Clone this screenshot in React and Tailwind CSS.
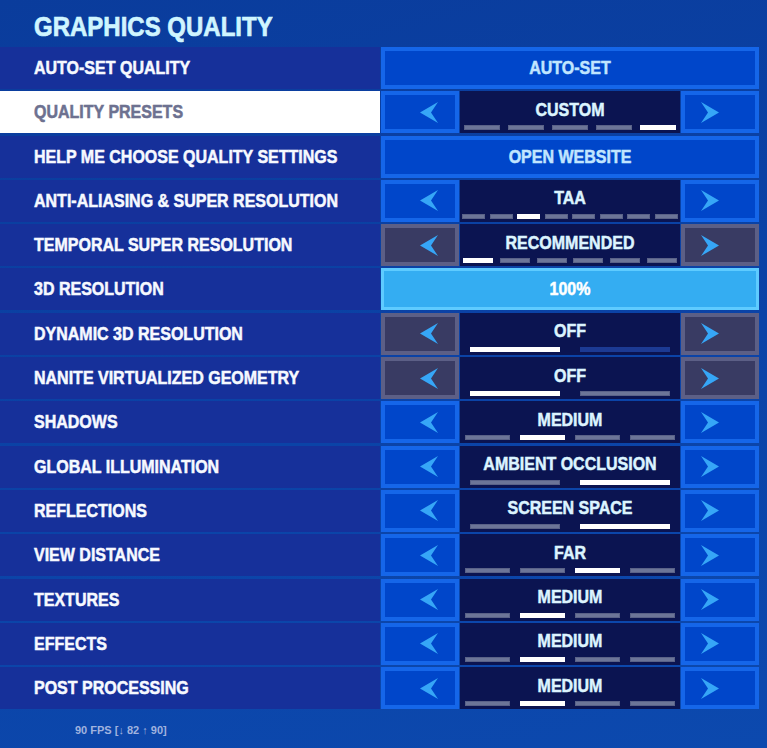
import React from 'react';

const FONT = { fontFamily: '"Liberation Sans", Arial, sans-serif' };

const ROWS = [
  { label: 'AUTO-SET QUALITY', type: 'button', value: 'AUTO-SET' },
  { label: 'QUALITY PRESETS', type: 'picker', value: 'CUSTOM', count: 5, sel: 4, active: true },
  { label: 'HELP ME CHOOSE QUALITY SETTINGS', type: 'button', value: 'OPEN WEBSITE' },
  { label: 'ANTI-ALIASING & SUPER RESOLUTION', type: 'picker', value: 'TAA', count: 8, sel: 2 },
  { label: 'TEMPORAL SUPER RESOLUTION', type: 'picker', value: 'RECOMMENDED', count: 6, sel: 0, disabled: true },
  { label: '3D RESOLUTION', type: 'slider', value: '100%' },
  { label: 'DYNAMIC 3D RESOLUTION', type: 'picker', value: 'OFF', count: 2, sel: 0, disabled: true, dark: true },
  { label: 'NANITE VIRTUALIZED GEOMETRY', type: 'picker', value: 'OFF', count: 2, sel: 0, disabled: true },
  { label: 'SHADOWS', type: 'picker', value: 'MEDIUM', count: 4, sel: 1 },
  { label: 'GLOBAL ILLUMINATION', type: 'picker', value: 'AMBIENT OCCLUSION', count: 2, sel: 1 },
  { label: 'REFLECTIONS', type: 'picker', value: 'SCREEN SPACE', count: 2, sel: 1 },
  { label: 'VIEW DISTANCE', type: 'picker', value: 'FAR', count: 4, sel: 2 },
  { label: 'TEXTURES', type: 'picker', value: 'MEDIUM', count: 4, sel: 1 },
  { label: 'EFFECTS', type: 'picker', value: 'MEDIUM', count: 4, sel: 1 },
  { label: 'POST PROCESSING', type: 'picker', value: 'MEDIUM', count: 4, sel: 1 },
];

function Arrow({ dir }) {
  return (
    <svg width="18" height="21" viewBox="0 0 18 21">
      {dir === 'left' ? (
        <path d="M18 0 L0 10.5 L18 21 L11 10.5 Z" fill="#36a6f7" />
      ) : (
        <path d="M0 0 L18 10.5 L0 21 L7 10.5 Z" fill="#36a6f7" />
      )}
    </svg>
  );
}

function ArrowButton({ dir, disabled }) {
  const color = disabled
    ? 'border-[#5c5f86] bg-[#393b63]'
    : 'border-[#1566e9] bg-[#0046ca]';
  return (
    <div
      className={`w-[78px] h-full border-[4px] flex items-center ${color} ${
        dir === 'left' ? 'justify-end pr-[17px]' : 'justify-start pl-[16px]'
      }`}
    >
      <Arrow dir={dir} />
    </div>
  );
}

// game font is heavier and taller than Arial bold, so stretch + stroke it a bit
function Label({ text, className = '' }) {
  return (
    <span className={`inline-block scale-y-[1.2] font-bold [-webkit-text-stroke:0.45px_currentColor] ${className}`}>
      {text}
    </span>
  );
}

function Picker({ row }) {
  return (
    <div className="flex h-full gap-[1px]">
      <ArrowButton dir="left" disabled={row.disabled} />
      <div className="flex-1 h-full bg-[#0b1451] flex flex-col">
        <div className="flex-1 flex items-center justify-center pt-[3px] text-[16px] text-[#dcf4ff]">
          <Label text={row.value} />
        </div>
        <div className="flex h-[5px] mb-[3px]">
          {Array.from({ length: row.count }, (_, i) => (
            <div key={i} className="flex-1 flex justify-center">
              <div
                className={`w-[82%] h-full ${
                  i === row.sel
                    ? 'bg-white'
                    : row.dark
                    ? 'bg-[#1c3a93]'
                    : 'bg-[#6c7598] border border-[#5a6288]'
                }`}
              />
            </div>
          ))}
        </div>
      </div>
      <ArrowButton dir="right" disabled={row.disabled} />
    </div>
  );
}

function Control({ row }) {
  if (row.type === 'button') {
    return (
      <div className="h-full border-[4px] border-[#1566e9] bg-[#0046ca] flex items-center justify-center text-[16px] text-[#c0e5ff]">
        <Label text={row.value} />
      </div>
    );
  }
  if (row.type === 'slider') {
    return (
      <div className="h-full border-[3px] border-[#5ecbff] bg-[#34adf2] flex items-center justify-center text-[16px] text-white">
        <Label text={row.value} />
      </div>
    );
  }
  return <Picker row={row} />;
}

export default function App() {
  return (
    <div
      className="w-full h-[748px] overflow-hidden bg-[linear-gradient(165deg,#0a3c9c_0%,#0b43a7_55%,#0c49ae_100%)]"
      style={FONT}
    >
      {/* Title */}
      <div className="h-[47px] flex items-center pl-[34px] pt-[6px] text-[24px] text-[#cff5ff]">
        <span className="inline-block scale-y-[1.16] font-bold [-webkit-text-stroke:0.6px_currentColor]">
          GRAPHICS QUALITY
        </span>
      </div>

      {/* Settings list */}
      <div className="flex flex-col gap-[2.3px]">
        {ROWS.map((row) => (
          <div key={row.label} className="flex h-[42px] gap-[1px]">
            <div
              className={`w-[380px] h-full flex items-center pl-[34px] text-[16px] ${
                row.active ? 'bg-white text-[#6d7190]' : 'bg-[#16309a] text-[#f6f9ff]'
              }`}
            >
              <Label text={row.label} />
            </div>
            <div className="w-[378px] h-full">
              <Control row={row} />
            </div>
          </div>
        ))}
      </div>

      {/* FPS counter */}
      <div className="mt-[15px] pl-[75px] text-[11px] leading-[13px] font-bold text-[#a0b3df]">
        90 FPS [↓ 82 ↑ 90]
      </div>
    </div>
  );
}
